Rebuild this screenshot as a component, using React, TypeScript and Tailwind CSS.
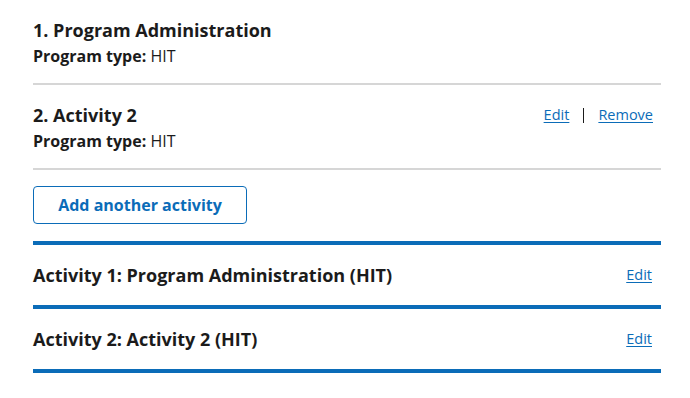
const font = { fontFamily: '"Open Sans", "Liberation Sans", sans-serif' };

function LinkBtn({ children }: { children: React.ReactNode }) {
  return (
    <a href="#" className="text-[14.5px] leading-5 text-[#0b6cb8] underline underline-offset-[2px]">
      {children}
    </a>
  );
}

function Activity({ title, type, actions }: { title: string; type: string; actions?: boolean }) {
  return (
    <div className="flex items-start justify-between border-b-2 border-[#d6d6d6] pb-[15px] pt-[18px]">
      <div>
        <h2 className="text-[18px] font-bold leading-[24px] text-[#1b1b1b]">{title}</h2>
        <p className="mt-[2px] text-[16px] leading-[24px] text-[#1b1b1b]">
          <span className="font-bold">Program type:</span> {type}
        </p>
      </div>
      {actions && (
        <div className="mr-[8px] mt-[2px] flex items-center gap-[14px]">
          <LinkBtn>Edit</LinkBtn>
          <span className="h-[15px] w-px bg-[#1b1b1b]" />
          <LinkBtn>Remove</LinkBtn>
        </div>
      )}
    </div>
  );
}

function Summary({ title }: { title: string }) {
  return (
    <div className="flex h-[64px] items-center justify-between border-b-4 border-[#0b6cb8] pr-[9px]">
      <h3 className="text-[18px] font-bold leading-[24px] text-[#1b1b1b]">{title}</h3>
      <LinkBtn>Edit</LinkBtn>
    </div>
  );
}

export default function App() {
  return (
    <div className="min-h-[398px] w-[690px] bg-white pl-[33px] pr-[29px]" style={font}>
      <div className="w-[628px]">
        <Activity title="1. Program Administration" type="HIT" />
        <Activity title="2. Activity 2" type="HIT" actions />
        <div className="pt-[16px]">
          <button className="h-[38px] w-[214px] rounded-[4px] border border-[#0b6cb8] text-[16px] font-bold text-[#0b6cb8]">
            Add another activity
          </button>
        </div>
        <div className="mt-[17px] border-b-4 border-[#0b6cb8]" />
        <Summary title="Activity 1: Program Administration (HIT)" />
        <Summary title="Activity 2: Activity 2 (HIT)" />
      </div>
    </div>
  );
}
